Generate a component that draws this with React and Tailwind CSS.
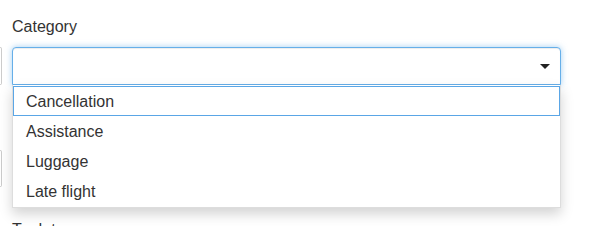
import { useState } from "react";

const OPTIONS = ["Cancellation", "Assistance", "Luggage", "Late flight"];

export default function App() {
  const [active, setActive] = useState(0);

  return (
    <div className="flex h-[226px] w-[591px] overflow-hidden bg-white font-['Liberation_Sans',Arial,sans-serif] text-[16px] text-[#333]">
      <div className="w-[2px] shrink-0">
        <div className="mt-[47px] h-[38px] rounded-r-[4px] border-y border-r border-[#ccc]" />
        <div className="mt-[65px] h-[37px] rounded-r-[4px] border-y border-r border-[#ccc]" />
      </div>

      <div className="ml-[10px] w-[549px] shrink-0 pt-[16px]">
        <label className="block leading-[22px]">Category</label>

        <div className="relative mt-[9px]">
          <div className="flex h-[38px] items-center justify-end rounded-t-[4px] border border-[#66afe9] bg-white pr-[10px] shadow-[inset_0_1px_1px_rgba(0,0,0,0.075),0_0_6px_rgba(102,175,233,0.6)]">
            <svg width="10" height="5" viewBox="0 0 10 5" className="mt-[1px]">
              <path d="M0 0h10L5 5z" fill="#222" />
            </svg>
          </div>

          <ul className="absolute left-0 top-[38px] z-10 w-full border-x border-b border-[#ddd] bg-white py-[1px] shadow-[0_6px_12px_rgba(0,0,0,0.175)]">
            {OPTIONS.map((item, i) => (
              <li
                key={item}
                onMouseEnter={() => setActive(i)}
                className={
                  i === active
                    ? "h-[30px] pl-[13px] pt-[1px] leading-[29px] shadow-[inset_0_0_0_1px_#5aa6e6]"
                    : "h-[30px] pl-[13px] pt-[1px] leading-[29px]"
                }
              >
                {item}
              </li>
            ))}
          </ul>
        </div>

        <label className="mt-[134px] block leading-[22px]">To date</label>
      </div>
    </div>
  );
}
